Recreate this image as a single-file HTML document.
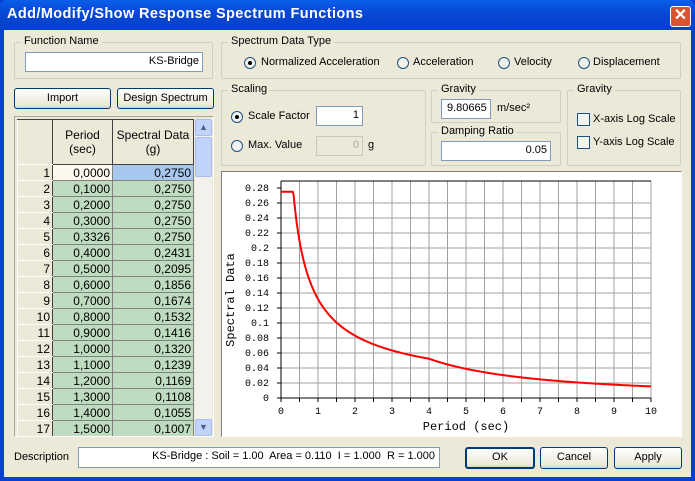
<!DOCTYPE html><html><head><style>
*{box-sizing:border-box}
body{margin:0;width:695px;height:481px;overflow:hidden;font-family:Tahoma,"Liberation Sans",sans-serif;font-size:11px;color:#000;position:relative;background:#0841d0}
.a{position:absolute}
#title{left:0;top:0;width:695px;height:30px;background:linear-gradient(#0a5fe8,#0848d6 40%,#0641c8);border-radius:7px 7px 0 0}
#title span{position:absolute;left:7px;top:6px;color:#fff;font-weight:bold;font-size:14.5px;letter-spacing:.4px}
#close{left:670px;top:6px;width:21px;height:21px;background:#d9532c;border:1px solid #fff;border-radius:3px;color:#fff;font-weight:bold;font-size:16px;text-align:center;line-height:18px}
#body{left:4px;top:30px;width:687px;height:447px;background:#ece9d8}
.g{position:absolute;border:1px solid #d0d0bf;border-radius:2px}
.g>b{position:absolute;top:-8px;left:6px;background:#ece9d8;padding:0 3px;font-weight:normal}
.in{position:absolute;background:#fff;border:1px solid #7f9db9;text-align:right;padding-right:3px;line-height:17px}
.btn{position:absolute;border:1px solid #003c74;border-radius:3px;background:linear-gradient(#fff,#ece9d8 85%,#d6d0c5);text-align:center;line-height:19px}
.rad{position:absolute;width:12px;height:12px;border-radius:50%;border:1px solid #1c5180;background:#f2f2ee}
.rad.on::after{content:"";position:absolute;left:3px;top:3px;width:4px;height:4px;border-radius:50%;background:#000}
.chk{position:absolute;width:13px;height:13px;border:1px solid #1c5180;background:#f4f4f0}
table{border-collapse:collapse;font-size:12px}
td{height:16px;padding:0 2px;text-align:right;border:1px solid #808080;line-height:14px}
td.h{background:#ece9d8;border-color:#404040 #404040 #fff #fff;width:35px}
td.p{background:#c0dcc0;width:60px}
td.s{background:#c0dcc0;width:81px}
svg text{font-family:"Liberation Mono",monospace;font-size:10px}
</style></head><body>
<div class="a" id="title"><span>Add/Modify/Show Response Spectrum Functions</span></div>
<div class="a" id="close">✕</div>
<div class="a" id="body"></div>
<div class="g" style="left:14px;top:42px;width:199px;height:37px"><b>Function Name</b></div>
<div class="in" style="left:25px;top:52px;width:178px;height:20px">KS-Bridge</div>
<div class="g" style="left:221px;top:42px;width:460px;height:37px"><b>Spectrum Data Type</b></div>
<div class="rad on" style="left:244px;top:57px"></div><div class="a" style="left:261px;top:56px">Normalized Acceleration</div>
<div class="rad" style="left:397px;top:57px"></div><div class="a" style="left:413px;top:56px">Acceleration</div>
<div class="rad" style="left:498px;top:57px"></div><div class="a" style="left:514px;top:56px">Velocity</div>
<div class="rad" style="left:578px;top:57px"></div><div class="a" style="left:593px;top:56px">Displacement</div>
<div class="btn" style="left:14px;top:88px;width:97px;height:21px">Import</div>
<div class="btn" style="left:117px;top:88px;width:97px;height:21px">Design Spectrum</div>
<div class="a" style="left:14px;top:116px;width:200px;height:321px;border:1px solid #fff;border-color:#aca899 #fff #fff #aca899;background:#ece9d8"></div>
<div class="a" style="left:17px;top:119px;width:177px;height:317px;overflow:hidden">
<table id="t"><tr><td class="h" style="height:45px"></td><td style="background:#ece9d8;text-align:center;border-color:#404040;width:60px;font-size:12px">Period<br>(sec)</td><td style="background:#ece9d8;text-align:center;border-color:#404040;width:81px">Spectral Data<br>(g)</td></tr></table></div>
<div class="a" style="left:195px;top:119px;width:17px;height:317px;background:#f3f1ec"></div>
<div class="a" style="left:195px;top:119px;width:17px;height:17px;background:#c1d3fb;border:1px solid #a8bef0;border-radius:2px;color:#4d6185;text-align:center;font-size:9px;line-height:15px">▲</div>
<div class="a" style="left:195px;top:137px;width:17px;height:40px;background:#c1d3fb;border:1px solid #a8bef0;border-radius:2px"></div>
<div class="a" style="left:195px;top:419px;width:17px;height:17px;background:#c1d3fb;border:1px solid #a8bef0;border-radius:2px;color:#4d6185;text-align:center;font-size:9px;line-height:15px">▼</div>
<div class="g" style="left:221px;top:90px;width:205px;height:76px"><b>Scaling</b></div>
<div class="rad on" style="left:231px;top:111px"></div><div class="a" style="left:248px;top:110px">Scale Factor</div>
<div class="in" style="left:316px;top:106px;width:47px;height:20px">1</div>
<div class="rad" style="left:231px;top:140px"></div><div class="a" style="left:248px;top:139px">Max. Value</div>
<div class="in" style="left:316px;top:136px;width:47px;height:20px;background:#ece9d8;color:#aca899;border-color:#c9c7ba">0</div>
<div class="a" style="left:368px;top:139px">g</div>
<div class="g" style="left:431px;top:90px;width:130px;height:33px"><b>Gravity</b></div>
<div class="in" style="left:441px;top:99px;width:50px;height:20px;text-align:left;padding-left:5px">9.80665</div>
<div class="a" style="left:497px;top:102px">m/sec²</div>
<div class="g" style="left:431px;top:132px;width:130px;height:34px"><b>Damping Ratio</b></div>
<div class="in" style="left:441px;top:141px;width:110px;height:20px">0.05</div>
<div class="g" style="left:567px;top:90px;width:114px;height:76px"><b>Gravity</b></div>
<div class="chk" style="left:577px;top:113px"></div><div class="a" style="left:593px;top:113px">X-axis Log Scale</div>
<div class="chk" style="left:577px;top:136px"></div><div class="a" style="left:593px;top:136px">Y-axis Log Scale</div>
<div class="a" style="left:221px;top:171px;width:461px;height:266px;background:#fff;border:1px solid #808080;border-color:#808080 #fff #fff #808080"></div>
<svg class="a" style="left:0;top:0" width="695" height="481" id="sv"></svg>
<div class="a" style="left:14px;top:451px">Description</div>
<div class="in" style="left:78px;top:447px;width:362px;height:21px;padding-right:4px">KS-Bridge : Soil = 1.00&nbsp; Area = 0.110&nbsp; I = 1.000&nbsp; R = 1.000</div>
<div class="btn" style="left:465px;top:447px;width:70px;height:22px;border-width:2px;line-height:17px">OK</div>
<div class="btn" style="left:540px;top:447px;width:68px;height:22px">Cancel</div>
<div class="btn" style="left:614px;top:447px;width:68px;height:22px">Apply</div>
<script>
var T=[0,.1,.2,.3,.3326,.4,.5,.6,.7,.8,.9,1,1.1,1.2,1.3,1.4,1.5],S=["0,2750","0,2750","0,2750","0,2750","0,2750","0,2431","0,2095","0,1856","0,1674","0,1532","0,1416","0,1320","0,1239","0,1169","0,1108","0,1055","0,1007"];
var t=document.getElementById('t'),h='';
for(var i=0;i<17;i++){var p=T[i].toFixed(4).replace('.',',');if(i==4)p='0,3326';
h+='<tr><td class="h">'+(i+1)+'</td><td class="p"'+(i==0?' style="background:#fdf8ee"':'')+'>'+p+'</td><td class="s"'+(i==0?' style="background:#a6c8ee"':'')+'>'+S[i]+'</td></tr>';}
t.insertAdjacentHTML('beforeend',h);
var s='',X0=281,K=37,Y0=398;
for(var k=1;k<=20;k++){var x=X0+k*18.5;s+='<line x1="'+x+'" y1="181" x2="'+x+'" y2="398" stroke="#a0a0a0"/>';}
for(var k=1;k<14;k++){var y=Y0-k*15;s+='<line x1="281" y1="'+y+'" x2="651" y2="'+y+'" stroke="#a0a0a0"/>';}
s+='<line x1="281" y1="181" x2="651" y2="181" stroke="#000"/><line x1="281" y1="181" x2="281" y2="402" stroke="#000"/><line x1="277" y1="398" x2="651" y2="398" stroke="#000"/>';
for(var k=0;k<=14;k++){var y=Y0-k*15,v=(k*0.02);var l=k==0?'0':(Math.round(v*100)/100).toString();s+='<line x1="277" y1="'+y+'" x2="281" y2="'+y+'" stroke="#000"/><text x="269" y="'+(y+3)+'" text-anchor="end">'+l+'</text>';}
for(var k=0;k<=20;k++){var x=X0+k*18.5;s+='<line x1="'+x+'" y1="398" x2="'+x+'" y2="402" stroke="#000"/>';if(k%2==0)s+='<text x="'+x+'" y="414" text-anchor="middle">'+(k/2)+'</text>';}
s+='<text x="466" y="430" text-anchor="middle" style="font-size:12px">Period (sec)</text><text transform="translate(234,300) rotate(-90)" text-anchor="middle" style="font-size:12px">Spectral Data</text>';
var pts=[];for(var T2=0;T2<=10.001;T2+=0.02){var a=T2<0.3326?0.275:(T2<=4?0.132/Math.pow(T2,2/3):0.0524*Math.pow(4/T2,4/3));if(a>0.275)a=0.275;pts.push((X0+K*T2).toFixed(1)+','+(Y0-a*750).toFixed(1));}
s+='<polyline points="'+pts.join(' ')+'" fill="none" stroke="#f00" stroke-width="2"/>';
document.getElementById('sv').innerHTML=s;
</script>
</body></html>
